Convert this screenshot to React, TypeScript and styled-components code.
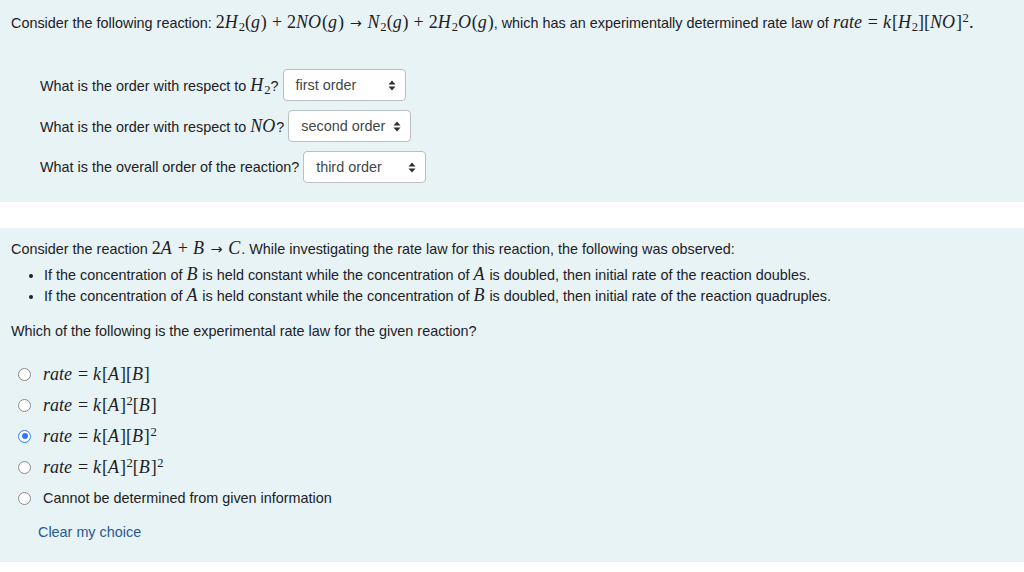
import React from "react";
import styled, { createGlobalStyle } from "styled-components";

const GlobalStyle = createGlobalStyle`
  body {
    margin: 0;
    background: #ffffff;
    font-family: "Liberation Sans", Arial, sans-serif;
    font-size: 14.4px;
    color: #1d2125;
  }
`;

// pequenos pedaços de matemática (estilo MathJax)
const M = styled.span`
  font-family: "Liberation Serif", "Times New Roman", serif;
  font-size: 18px;
  line-height: 1;
  white-space: nowrap;
`;
const V = styled.i`
  font-style: italic;
  padding-right: 0.05em;
`;
const Sub = styled.span`
  font-size: 0.7em;
  vertical-align: -0.25em;
  line-height: 0;
`;
const Sup = styled.span`
  font-size: 0.7em;
  vertical-align: 0.5em;
  line-height: 0;
  padding-left: 0.05em;
`;
const Op = styled.span`
  padding: 0 0.28em;
`;
const Arrow = styled.span`
  padding: 0 0.4em;
  font-family: "DejaVu Sans", sans-serif;
  font-size: 0.8em;
`;

const Page = styled.div`
  display: flex;
  flex-direction: column;
  gap: 26px;
  padding-bottom: 11px;
`;

const Panel = styled.section<{ $top: number; $bottom: number }>`
  background: #e7f3f5;
  padding: ${(p) => `${p.$top}px 11px ${p.$bottom}px 11px`};
`;

const Intro = styled.p`
  margin: 0;
  line-height: 20px;
`;

const Questions = styled.div`
  display: flex;
  flex-direction: column;
  gap: 9px;
  margin: 36px 0 0 29px;
`;

const QRow = styled.div`
  display: flex;
  align-items: center;
  gap: 4px;
`;

const Select = styled.div`
  box-sizing: border-box;
  width: 123px;
  height: 32px;
  display: flex;
  align-items: center;
  justify-content: space-between;
  padding: 0 9px 0 12px;
  background: #ffffff;
  border: 1px solid #b9bfc5;
  border-radius: 4px;
  color: #42474c;
`;

const BulletList = styled.ul`
  margin: 6px 0 0 0;
  padding-left: 33px;
  li {
    line-height: 21px;
  }
`;

const Prompt = styled.p`
  margin: 14px 0 0 0;
  line-height: 20px;
`;

const Options = styled.div`
  display: flex;
  flex-direction: column;
  gap: 11px;
  margin-top: 23px;
`;

const Option = styled.label`
  display: flex;
  align-items: center;
  gap: 12px;
  height: 20px;
  padding-left: 7px;
`;

const Radio = styled.span<{ checked?: boolean }>`
  box-sizing: border-box;
  width: 13px;
  height: 13px;
  border-radius: 50%;
  background: #ffffff;
  border: ${(p) => (p.checked ? "1.5px solid #3478f6" : "1px solid #8a8a8a")};
  display: flex;
  align-items: center;
  justify-content: center;
  &::after {
    content: "";
    width: 6px;
    height: 6px;
    border-radius: 50%;
    background: ${(p) => (p.checked ? "#3478f6" : "transparent")};
  }
`;

const ClearLink = styled.a`
  display: inline-block;
  margin: 16px 0 0 27px;
  color: #275a93;
  text-decoration: none;
`;

const Arrows = () => (
  <svg width="8" height="11" viewBox="0 0 8 11">
    <path d="M4 0.5 L7.5 4.5 H0.5 Z" fill="#2b2f33" />
    <path d="M4 10.5 L7.5 6.5 H0.5 Z" fill="#2b2f33" />
  </svg>
);

const Dropdown: React.FC<{ value: string }> = ({ value }) => (
  <Select>
    <span>{value}</span>
    <Arrows />
  </Select>
);

const options: { node: React.ReactNode; checked?: boolean }[] = [
  {
    node: (
      <M>
        <V>rate</V>
        <Op>=</Op>
        <V>k</V>[<V>A</V>][<V>B</V>]
      </M>
    ),
  },
  {
    node: (
      <M>
        <V>rate</V>
        <Op>=</Op>
        <V>k</V>[<V>A</V>]<Sup>2</Sup>[<V>B</V>]
      </M>
    ),
  },
  {
    node: (
      <M>
        <V>rate</V>
        <Op>=</Op>
        <V>k</V>[<V>A</V>][<V>B</V>]<Sup>2</Sup>
      </M>
    ),
    checked: true,
  },
  {
    node: (
      <M>
        <V>rate</V>
        <Op>=</Op>
        <V>k</V>[<V>A</V>]<Sup>2</Sup>[<V>B</V>]<Sup>2</Sup>
      </M>
    ),
  },
  { node: <span>Cannot be determined from given information</span> },
];

export default function App() {
  return (
    <>
      <GlobalStyle />
      <Page>
        <Panel $top={13} $bottom={19}>
          <Intro>
            Consider the following reaction:{" "}
            <M>
              2<V>H</V>
              <Sub>2</Sub>(<V>g</V>)<Op>+</Op>2<V>NO</V>(<V>g</V>)<Arrow>→</Arrow>
              <V>N</V>
              <Sub>2</Sub>(<V>g</V>)<Op>+</Op>2<V>H</V>
              <Sub>2</Sub>
              <V>O</V>(<V>g</V>)
            </M>
            , which has an experimentally determined rate law of{" "}
            <M>
              <V>rate</V>
              <Op>=</Op>
              <V>k</V>[<V>H</V>
              <Sub>2</Sub>][<V>NO</V>]<Sup>2</Sup>.
            </M>
          </Intro>
          <Questions>
            <QRow>
              <span>
                What is the order with respect to{" "}
                <M>
                  <V>H</V>
                  <Sub>2</Sub>
                </M>
                ?
              </span>
              <Dropdown value="first order" />
            </QRow>
            <QRow>
              <span>
                What is the order with respect to{" "}
                <M>
                  <V>NO</V>
                </M>
                ?
              </span>
              <Dropdown value="second order" />
            </QRow>
            <QRow>
              <span>What is the overall order of the reaction?</span>
              <Dropdown value="third order" />
            </QRow>
          </Questions>
        </Panel>

        <Panel $top={11} $bottom={22}>
          <Intro>
            Consider the reaction{" "}
            <M>
              2<V>A</V>
              <Op>+</Op>
              <V>B</V>
              <Arrow>→</Arrow>
              <V>C</V>
            </M>
            . While investigating the rate law for this reaction, the following was observed:
          </Intro>
          <BulletList>
            <li>
              If the concentration of{" "}
              <M>
                <V>B</V>
              </M>{" "}
              is held constant while the concentration of{" "}
              <M>
                <V>A</V>
              </M>{" "}
              is doubled, then initial rate of the reaction doubles.
            </li>
            <li>
              If the concentration of{" "}
              <M>
                <V>A</V>
              </M>{" "}
              is held constant while the concentration of{" "}
              <M>
                <V>B</V>
              </M>{" "}
              is doubled, then initial rate of the reaction quadruples.
            </li>
          </BulletList>
          <Prompt>Which of the following is the experimental rate law for the given reaction?</Prompt>
          <Options>
            {options.map((o, i) => (
              <Option key={i}>
                <Radio checked={o.checked} />
                {o.node}
              </Option>
            ))}
          </Options>
          <ClearLink href="#">Clear my choice</ClearLink>
        </Panel>
      </Page>
    </>
  );
}
